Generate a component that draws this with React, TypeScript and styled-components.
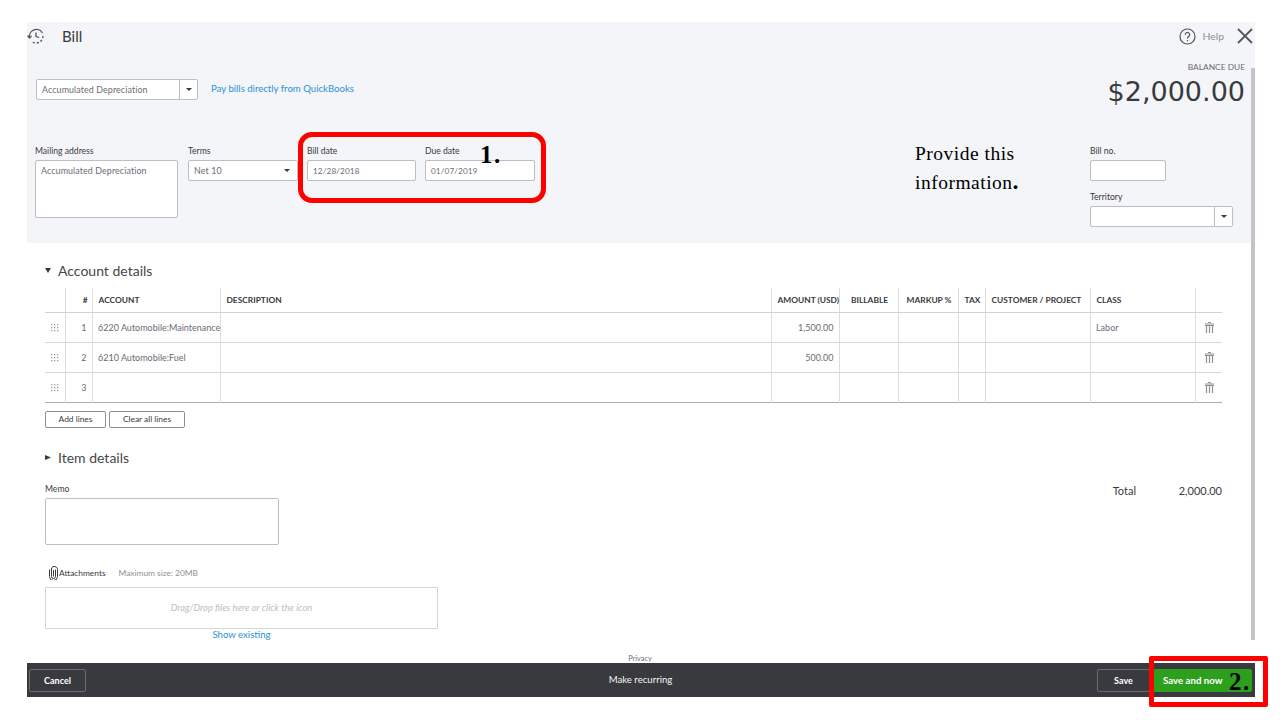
import React from "react";
import styled, { createGlobalStyle } from "styled-components";

const Global = createGlobalStyle`
  html, body { margin: 0; padding: 0; background: #fff; }
  body { font-family: Lato, "Open Sans", sans-serif; color: #393a3d; }
  * { box-sizing: border-box; }
`;

const Page = styled.div`
  position: relative;
  width: 1280px;
  height: 720px;
  overflow: hidden;
  padding: 22px 25px 23px 27px;
`;
const Win = styled.div`
  position: relative;
  height: 675px;
  display: flex;
  flex-direction: column;
`;
const Header = styled.header`
  height: 221px;
  flex: none;
  background: #f3f5f8;
  display: flex;
  flex-direction: column;
`;
const TitleBar = styled.div`
  height: 28px;
  display: flex;
  align-items: center;
  padding: 0 2px 0 0;
`;
const Title = styled.h1`
  margin: 0 0 0 17px;
  font-size: 15px;
  font-weight: 400;
  flex: 1;
`;
const HelpText = styled.span`
  font-size: 10.4px;
  color: #8d9096;
  margin: 0 13px 0 6px;
`;
const TopRow = styled.div`
  height: 81px;
  display: flex;
  padding: 0 10px 0 9px;
  justify-content: space-between;
`;
const PayerGroup = styled.div`
  display: flex;
  align-items: flex-start;
  padding-top: 29px;
  gap: 13px;
`;
const Link = styled.a`
  color: #2a93d5;
  font-size: 9.6px;
  line-height: 19px;
`;
const Balance = styled.div`
  display: flex;
  flex-direction: column;
  align-items: flex-end;
  padding-top: 12px;
`;
const BalanceLabel = styled.div`
  font-size: 8.4px;
  color: #6b6c72;
  line-height: 10px;
`;
const BalanceValue = styled.div`
  font-family: "DejaVu Sans", sans-serif;
  font-size: 27px;
  line-height: 38px;
  margin-top: 1px;
  color: #393a3d;
`;
const FieldRow = styled.div`
  display: flex;
  padding-left: 8px;
  padding-top: 15px;
`;
const Field = styled.div<{ $w: number; $gap?: number }>`
  width: ${(p) => p.$w}px;
  margin-right: ${(p) => p.$gap ?? 0}px;
  flex: none;
`;
const Label = styled.label`
  display: block;
  font-size: 8.6px;
  line-height: 10px;
  height: 14px;
  color: #393a3d;
`;
const TextBox = styled.div<{ $h?: number }>`
  height: ${(p) => p.$h ?? 21}px;
  background: #fff;
  border: 1px solid #babec5;
  border-radius: 2px;
  font-size: 8.85px;
  line-height: 12px;
  padding: 4px 5px;
  color: #6b6c72;
  display: flex;
  letter-spacing: 0.12px;
`;
const DateBox = styled(TextBox)`
  font-size: 8.2px;
`;
const SelectBox = styled(TextBox)`
  padding: 0 0 0 5px;
  align-items: center;
  justify-content: space-between;
`;
const Arrow = styled.span<{ $divided?: boolean }>`
  height: 100%;
  width: ${(p) => (p.$divided ? 18 : 20)}px;
  border-left: ${(p) => (p.$divided ? "1px solid #babec5" : "none")};
  display: flex;
  align-items: center;
  justify-content: center;
  &::after {
    content: "";
    border-left: 3px solid transparent;
    border-right: 3px solid transparent;
    border-top: 3px solid #393a3d;
  }
`;
const RightFields = styled.div`
  margin-left: auto;
  width: 165px;
  display: flex;
  flex-direction: column;
`;
const Spaced = styled.div`
  margin-top: 11px;
`;
const Main = styled.main`
  flex: 1;
  padding: 17px 33px 0 18px;
  display: flex;
  flex-direction: column;
`;
const SectionTitle = styled.div`
  display: flex;
  align-items: center;
  height: 20px;
  font-size: 14px;
  color: #45474b;
  gap: 7px;
`;
const Caret = styled.span<{ $open?: boolean }>`
  width: 6px;
  height: 6px;
  background: #393a3d;
  clip-path: ${(p) =>
    p.$open ? "polygon(0 15%, 100% 15%, 50% 100%)" : "polygon(0 10%, 100% 50%, 0 90%)"};
`;
const Table = styled.table`
  margin-top: 8px;
  width: 1177px;
  table-layout: fixed;
  border-collapse: collapse;
  border-bottom: 1px solid #a9abb0;
`;
const Th = styled.th<{ $right?: boolean; $center?: boolean }>`
  height: 24px;
  padding: 0 4px 0 6px;
  font-size: 8.4px;
  font-weight: 700;
  color: #393a3d;
  white-space: nowrap;
  text-align: ${(p) => (p.$right ? "right" : p.$center ? "center" : "left")};
  border-left: 1px solid #dcdee2;
  border-bottom: 1px solid #cfd1d5;
  &:first-child { border-left: none; }
`;
const Td = styled.td<{ $right?: boolean; $center?: boolean }>`
  height: 30px;
  padding: 0 5px 0 5.500px;
  font-size: 9px;
  color: #6b6c72;
  white-space: nowrap;
  text-align: ${(p) => (p.$right ? "right" : p.$center ? "center" : "left")};
  border-left: 1px solid #dcdee2;
  border-top: 1px solid #d4d7dc;
  &:first-child { border-left: none; }
  svg { display: block; margin: 1px auto 0; }
`;
const Buttons = styled.div`
  display: flex;
  gap: 3px;
  margin-top: 8px;
`;
const SmallBtn = styled.button<{ $w: number }>`
  width: ${(p) => p.$w}px;
  height: 17px;
  padding: 0;
  border: 1px solid #8d9096;
  border-radius: 2px;
  background: #fff;
  font: 400 8.400px Lato, sans-serif;
  color: #393a3d;
`;
const ItemSection = styled.div`
  margin-top: 20px;
`;
const MemoRow = styled.div`
  display: flex;
  justify-content: space-between;
  margin-top: 16px;
`;
const Total = styled.div`
  display: flex;
  font-size: 11px;
  line-height: 14px;
  color: #393a3d;
`;
const TotalValue = styled.span`
  width: 86px;
  text-align: right;
`;
const MemoLabel = styled.div`
  font-size: 8.6px;
  height: 14px;
  line-height: 10px;
`;
const Memo = styled.div`
  width: 234px;
  height: 47px;
  border: 1px solid #babec5;
  border-radius: 2px;
`;
const AttachRow = styled.div`
  display: flex;
  align-items: center;
  margin-top: 20px;
  height: 16px;
  padding-left: 4px;
  font-size: 8.400px;
`;
const AttachName = styled.span`
  color: #393a3d;
  margin-left: 1px;
`;
const AttachHint = styled.span`
  margin-left: 13px;
  color: #8d9096;
`;
const Drop = styled.div`
  width: 393px;
  height: 42px;
  margin-top: 6px;
  border: 1px solid #d4d7dc;
  display: flex;
  align-items: center;
  justify-content: center;
  font-size: 9.400px;
  font-style: italic;
  color: #babec5;
`;
const ShowExisting = styled.a`
  display: block;
  width: 393px;
  text-align: center;
  color: #2a93d5;
  font-size: 9.6px;
  line-height: 12px;
`;
const Privacy = styled.div`
  text-align: center;
  font-size: 7.4px;
  line-height: 9px;
  height: 9px;
  margin-top: 13px;
  color: #6b6c72;
  width: 1190px;
`;
const Footer = styled.footer`
  height: 34px;
  flex: none;
  background: #393a3d;
  display: grid;
  grid-template-columns: 1fr auto 1fr;
  align-items: center;
  padding: 0 3px 0 2px;
  color: #fff;
`;
const Recurring = styled.div`
  font-size: 9.6px;
  color: #f4f5f8;
  position: relative;
  top: -1px;
`;
const FootBtn = styled.button<{ $w: number }>`
  width: ${(p) => p.$w}px;
  height: 23px;
  padding: 0;
  border: 1px solid #6b6c72;
  border-radius: 2px;
  background: transparent;
  color: #fff;
  font: 700 9px Lato, sans-serif;
`;
const FootRight = styled.div`
  display: flex;
  justify-content: flex-end;
  gap: 3px;
`;
const GreenBtn = styled(FootBtn)`
  background: #2ca01c;
  border-color: #2ca01c;
  text-align: left;
  padding-left: 9px;
  font-size: 9.700px;
`;
const Scrollbar = styled.div`
  position: absolute;
  right: 0;
  top: 46px;
  width: 4px;
  height: 572px;
  background: #c4c5c7;
`;
const RedBox = styled.div<{ $x: number; $y: number; $w: number; $h: number; $r: number; $b: number }>`
  position: absolute;
  left: ${(p) => p.$x}px;
  top: ${(p) => p.$y}px;
  width: ${(p) => p.$w}px;
  height: ${(p) => p.$h}px;
  border: ${(p) => p.$b}px solid #f00;
  border-radius: ${(p) => p.$r}px;
`;
const Note = styled.div`
  position: absolute;
  left: 915px;
  top: 139px;
  font: 400 19.500px/29px "Liberation Serif", serif;
  letter-spacing: 0.5px;
  color: #000;
  white-space: nowrap;
`;
const Period = styled.b`
  font-size: 24px;
  line-height: 0;
`;
const Num = styled.div<{ $x: number; $y: number }>`
  position: absolute;
  left: ${(p) => p.$x}px;
  top: ${(p) => p.$y}px;
  font: 700 25px/24px "Liberation Serif", serif;
  letter-spacing: 1.500px;
  color: #000;
`;

const HistoryIcon = () => (
  <svg width="18" height="18" viewBox="0 0 18 18" fill="none" stroke="#55575c" strokeWidth="1.3">
    <path d="M2.500 10.500A7 7 0 0 1 15.500 6" />
    <path d="M16 9a7 7 0 0 1-11.500 5.400" strokeDasharray="2.200 1.800" />
    <path d="M.7 8.500l1.800 2.500 2.200-2.100" />
    <path d="M9 5.500v4l3.200 1" />
  </svg>
);
const HelpIcon = () => (
  <svg width="17" height="17" viewBox="0 0 17 17" fill="none" stroke="#55575c" strokeWidth="1.2">
    <circle cx="8.500" cy="8.500" r="7.500" />
    <path d="M6.300 6.700a2.200 2.200 0 1 1 3.400 1.800c-.8.500-1.200 1-1.200 2" />
    <path d="M8.500 12v1.300" />
  </svg>
);
const CloseIcon = () => (
  <svg width="16" height="16" viewBox="0 0 16 16" fill="none" stroke="#55575c" strokeWidth="1.800">
    <path d="M1 1l14 14M15 1L1 15" />
  </svg>
);
const Grip = () => (
  <svg width="8" height="8" viewBox="0 0 8 8" fill="#9a9ca1">
    {[0, 3, 6].flatMap((y) =>
      [0, 3, 6].map((x) => <rect key={`${x}-${y}`} x={x} y={y} width="1.300" height="1.300" />)
    )}
  </svg>
);
const Trash = () => (
  <svg width="9" height="11" viewBox="0 0 9 11" fill="none" stroke="#8d9096" strokeWidth="1">
    <path d="M3 .5h3M0 2h9M0 3.500h9" />
    <path d="M1.500 4v7M4.500 4v7M7.500 4v7" strokeWidth="1.200" />
  </svg>
);
const Clip = () => (
  <svg width="9" height="14" viewBox="0 0 9 14" fill="none" stroke="#393a3d" strokeWidth="1">
    <path d="M6.500 3.500v7a2 2 0 0 1-4 0V3a3 3 0 0 1 1.500-2.400" />
    <path d="M4.500 4v6.500M4 .5c2.800-.3 4.500 1 4.500 3v7a4 4 0 0 1-8 0V3.500" />
  </svg>
);

const widths = [20, 27, 128, 551, 68, 59, 60, 27, 105, 105, 27];
const rows = [
  { n: 1, account: "6220 Automobile:Maintenance", amount: "1,500.00", cls: "Labor" },
  { n: 2, account: "6210 Automobile:Fuel", amount: "500.00", cls: "" },
  { n: 3, account: "", amount: "", cls: "" },
];

export default function App() {
  return (
    <Page>
      <Global />
      <Win>
        <Header>
          <TitleBar>
            <HistoryIcon />
            <Title>Bill</Title>
            <HelpIcon />
            <HelpText>Help</HelpText>
            <CloseIcon />
          </TitleBar>
          <TopRow>
            <PayerGroup>
              <Field $w={162}>
                <SelectBox>
                  Accumulated Depreciation
                  <Arrow $divided />
                </SelectBox>
              </Field>
              <Link>Pay bills directly from QuickBooks</Link>
            </PayerGroup>
            <Balance>
              <BalanceLabel>BALANCE DUE</BalanceLabel>
              <BalanceValue>$2,000.00</BalanceValue>
            </Balance>
          </TopRow>
          <FieldRow>
            <Field $w={143} $gap={10}>
              <Label>Mailing address</Label>
              <TextBox $h={58}>Accumulated Depreciation</TextBox>
            </Field>
            <Field $w={110} $gap={9}>
              <Label>Terms</Label>
              <SelectBox>
                Net 10
                <Arrow />
              </SelectBox>
            </Field>
            <Field $w={109} $gap={9}>
              <Label>Bill date</Label>
              <DateBox>12/28/2018</DateBox>
            </Field>
            <Field $w={110}>
              <Label>Due date</Label>
              <DateBox>01/07/2019</DateBox>
            </Field>
            <RightFields>
              <Field $w={76}>
                <Label>Bill no.</Label>
                <TextBox />
              </Field>
              <Spaced>
                <Field $w={143}>
                  <Label>Territory</Label>
                  <SelectBox>
                    <span />
                    <Arrow $divided />
                  </SelectBox>
                </Field>
              </Spaced>
            </RightFields>
          </FieldRow>
        </Header>

        <Main>
          <SectionTitle>
            <Caret $open />
            Account details
          </SectionTitle>
          <Table>
            <colgroup>
              {widths.map((w, i) => (
                <col key={i} style={{ width: w }} />
              ))}
            </colgroup>
            <thead>
              <tr>
                <Th />
                <Th $right>#</Th>
                <Th>ACCOUNT</Th>
                <Th>DESCRIPTION</Th>
                <Th $right>AMOUNT (USD)</Th>
                <Th $center>BILLABLE</Th>
                <Th $center>MARKUP %</Th>
                <Th $center>TAX</Th>
                <Th>CUSTOMER / PROJECT</Th>
                <Th>CLASS</Th>
                <Th />
              </tr>
            </thead>
            <tbody>
              {rows.map((r) => (
                <tr key={r.n}>
                  <Td $center>
                    <Grip />
                  </Td>
                  <Td $right>{r.n}</Td>
                  <Td>{r.account}</Td>
                  <Td />
                  <Td $right>{r.amount}</Td>
                  <Td />
                  <Td />
                  <Td />
                  <Td />
                  <Td>{r.cls}</Td>
                  <Td $center>
                    <Trash />
                  </Td>
                </tr>
              ))}
            </tbody>
          </Table>
          <Buttons>
            <SmallBtn $w={61}>Add lines</SmallBtn>
            <SmallBtn $w={76}>Clear all lines</SmallBtn>
          </Buttons>
          <ItemSection>
            <SectionTitle>
              <Caret />
              Item details
            </SectionTitle>
          </ItemSection>
          <MemoRow>
            <div>
              <MemoLabel>Memo</MemoLabel>
              <Memo />
            </div>
            <Total>
              <span>Total</span>
              <TotalValue>2,000.00</TotalValue>
            </Total>
          </MemoRow>
          <AttachRow>
            <Clip />
            <AttachName>Attachments</AttachName>
            <AttachHint>Maximum size: 20MB</AttachHint>
          </AttachRow>
          <Drop>Drag/Drop files here or click the icon</Drop>
          <ShowExisting>Show existing</ShowExisting>
          <Privacy>Privacy</Privacy>
        </Main>

        <Footer>
          <div>
            <FootBtn $w={57}>Cancel</FootBtn>
          </div>
          <Recurring>Make recurring</Recurring>
          <FootRight>
            <FootBtn $w={53}>Save</FootBtn>
            <GreenBtn $w={99}>Save and now</GreenBtn>
          </FootRight>
        </Footer>
        <Scrollbar />
      </Win>

      <RedBox $x={298} $y={132} $w={248} $h={71} $r={14} $b={5} />
      <RedBox $x={1149} $y={656} $w={119} $h={51} $r={2} $b={5} />
      <Num $x={480} $y={143}>1.</Num>
      <Num $x={1229} $y={670}>2.</Num>
      <Note>
        Provide this
        <br />
        information<Period>.</Period>
      </Note>
    </Page>
  );
}
